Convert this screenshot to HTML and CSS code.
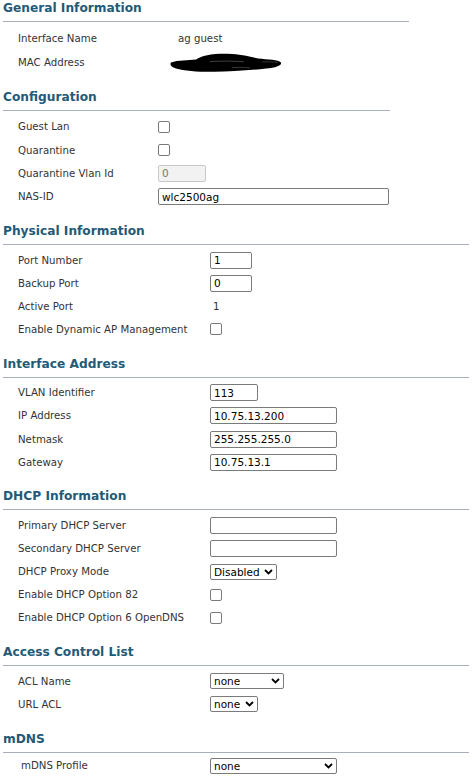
FILE: index.html
```html
<!DOCTYPE html>
<html>
<head>
<meta charset="utf-8">
<link rel="stylesheet" href="styles.css">
</head>
<body>
<section class="sec sec-general">
  <h2 class="sec-title">General Information</h2>
  <div class="rows">
    <div class="lbl">Interface Name</div><div class="val">ag guest</div>
    <div class="lbl">MAC Address</div>
    <div class="val">
      <svg class="redact" width="112" height="20" viewBox="0 0 112 20">
        <path d="M1 9.5 C 8 7, 18 7.5, 26 6.5 C 32 2.5, 42 0.5, 58 0.8 C 70 1.2, 78 3, 88 5.5 C 98 6.5, 108 6.5, 111 9.5 C 112 12.5, 106 14.5, 96 15.5 C 80 17.5, 60 18.5, 44 18.8 C 30 19, 14 18, 6 15.5 C 1 14, -0.5 11.5, 1 9.5 Z" fill="#000"/>
        <path d="M40 8.6 C 52 7.8, 64 8, 74 8.8" stroke="#6a6a6a" stroke-width="0.6" fill="none"/>
        <path d="M62 14.6 C 68 14.2, 74 14.3, 80 14.8" stroke="#5a5a5a" stroke-width="0.6" fill="none"/>
        <path d="M92 9 C 98 8.6, 104 8.8, 108 9.6" stroke="#555" stroke-width="0.6" fill="none"/>
      </svg>
    </div>
  </div>
</section>

<section class="sec sec-config">
  <h2 class="sec-title">Configuration</h2>
  <div class="rows">
    <div class="lbl">Guest Lan</div><div class="val"><input type="checkbox" class="chk"></div>
    <div class="lbl">Quarantine</div><div class="val"><input type="checkbox" class="chk"></div>
    <div class="lbl">Quarantine Vlan Id</div><div class="val"><input type="text" class="txt w48" value="0" disabled></div>
    <div class="lbl">NAS-ID</div><div class="val"><input type="text" class="txt w231" value="wlc2500ag"></div>
  </div>
</section>

<section class="sec sec-wide">
  <h2 class="sec-title">Physical Information</h2>
  <div class="rows">
    <div class="lbl">Port Number</div><div class="val"><input type="text" class="txt w42" value="1"></div>
    <div class="lbl">Backup Port</div><div class="val"><input type="text" class="txt w42" value="0"></div>
    <div class="lbl">Active Port</div><div class="val plain">1</div>
    <div class="lbl">Enable Dynamic AP Management</div><div class="val"><input type="checkbox" class="chk"></div>
  </div>
</section>

<section class="sec sec-wide">
  <h2 class="sec-title">Interface Address</h2>
  <div class="rows">
    <div class="lbl">VLAN Identifier</div><div class="val"><input type="text" class="txt w48" value="113"></div>
    <div class="lbl">IP Address</div><div class="val"><input type="text" class="txt w127" value="10.75.13.200"></div>
    <div class="lbl">Netmask</div><div class="val"><input type="text" class="txt w127" value="255.255.255.0"></div>
    <div class="lbl">Gateway</div><div class="val"><input type="text" class="txt w127" value="10.75.13.1"></div>
  </div>
</section>

<section class="sec sec-wide">
  <h2 class="sec-title">DHCP Information</h2>
  <div class="rows">
    <div class="lbl">Primary DHCP Server</div><div class="val"><input type="text" class="txt w127" value=""></div>
    <div class="lbl">Secondary DHCP Server</div><div class="val"><input type="text" class="txt w127" value=""></div>
    <div class="lbl">DHCP Proxy Mode</div>
    <div class="val">
      <span class="sel w67"><select><option>Disabled</option><option>Enabled</option></select>
        <svg class="chev" width="9" height="6" viewBox="0 0 9 6"><path d="M1 1 L4.5 4.5 L8 1" stroke="#000" stroke-width="1.8" fill="none"/></svg></span>
    </div>
    <div class="lbl">Enable DHCP Option 82</div><div class="val"><input type="checkbox" class="chk"></div>
    <div class="lbl">Enable DHCP Option 6 OpenDNS</div><div class="val"><input type="checkbox" class="chk"></div>
  </div>
</section>

<section class="sec sec-wide">
  <h2 class="sec-title">Access Control List</h2>
  <div class="rows">
    <div class="lbl">ACL Name</div>
    <div class="val">
      <span class="sel w74"><select><option>none</option></select>
        <svg class="chev" width="9" height="6" viewBox="0 0 9 6"><path d="M1 1 L4.5 4.5 L8 1" stroke="#000" stroke-width="1.8" fill="none"/></svg></span>
    </div>
    <div class="lbl">URL ACL</div>
    <div class="val">
      <span class="sel w48"><select><option>none</option></select>
        <svg class="chev" width="9" height="6" viewBox="0 0 9 6"><path d="M1 1 L4.5 4.5 L8 1" stroke="#000" stroke-width="1.8" fill="none"/></svg></span>
    </div>
  </div>
</section>

<section class="sec sec-wide sec-mdns">
  <h2 class="sec-title">mDNS</h2>
  <div class="rows">
    <div class="lbl indent">mDNS Profile</div>
    <div class="val">
      <span class="sel w127"><select><option>none</option></select>
        <svg class="chev" width="9" height="6" viewBox="0 0 9 6"><path d="M1 1 L4.5 4.5 L8 1" stroke="#000" stroke-width="1.8" fill="none"/></svg></span>
    </div>
  </div>
</section>
</body>
</html>
```

FILE: styles.css
```css
html, body {
  margin: 0;
  padding: 0;
  background: #fff;
}
body {
  padding: 0 0 0 3px;
  font-family: "DejaVu Sans", Verdana, sans-serif;
  font-size: 10.2px;
  color: #333;
}
.sec {
  margin-bottom: 14.8px;
}
.sec-title {
  margin: 0;
  font-size: 12.2px;
  line-height: 16px;
  font-weight: bold;
  color: #225a78;
  padding-bottom: 5px;
  border-bottom: 1px solid #a8aebb;
}
.sec-general .sec-title { width: 406px; }
.sec-config .sec-title { width: 387px; }
.sec-wide .sec-title { width: 466px; }

.rows {
  display: grid;
  grid-template-columns: 192px 1fr;
  grid-auto-rows: 23.1px;
  align-items: center;
  padding-left: 15px;
  margin-top: 3.5px;
}
.sec-general .rows { grid-template-columns: 160px 1fr; grid-auto-rows: 24px; margin-top: 4.5px; }
.sec-config .rows { grid-template-columns: 140px 1fr; grid-auto-rows: 23.25px; margin-top: 4px; }
.sec-mdns .rows { margin-top: 1.5px; }

.lbl { white-space: nowrap; }
.lbl.indent { padding-left: 3px; }
.val { display: flex; align-items: center; }
.val.plain { padding-left: 3px; }

.redact { display: block; margin-left: -8px; }

.chk {
  -webkit-appearance: none;
  appearance: none;
  width: 12px;
  height: 12px;
  margin: 0;
  border: 1px solid #7a7a7a;
  border-radius: 2px;
  background: #fff;
}

.txt {
  box-sizing: border-box;
  height: 17px;
  margin: 0;
  padding: 0 3px;
  border: 1px solid #7b7b7b;
  border-radius: 2px;
  font-family: "DejaVu Sans", Verdana, sans-serif;
  font-size: 10.5px;
  color: #000;
  background: #fff;
}
.txt:disabled {
  background: #f2f2f2;
  border-color: #c9c9c9;
  color: #777;
}
.w42 { width: 42px; }
.w48 { width: 48px; }
.w67 { width: 67px; }
.w74 { width: 74px; }
.w127 { width: 127px; }
.w231 { width: 231px; }

.sel {
  position: relative;
  display: inline-block;
  height: 16px;
}
.sel select {
  -webkit-appearance: none;
  appearance: none;
  box-sizing: border-box;
  width: 100%;
  height: 16px;
  margin: 0;
  padding: 0 12px 0 3px;
  border: 1px solid #7b7b7b;
  border-radius: 2px;
  background: #fff;
  font-family: "DejaVu Sans", Verdana, sans-serif;
  font-size: 10.5px;
  line-height: 14px;
  color: #000;
}
.chev {
  position: absolute;
  right: 4px;
  top: 5px;
  pointer-events: none;
}
```
